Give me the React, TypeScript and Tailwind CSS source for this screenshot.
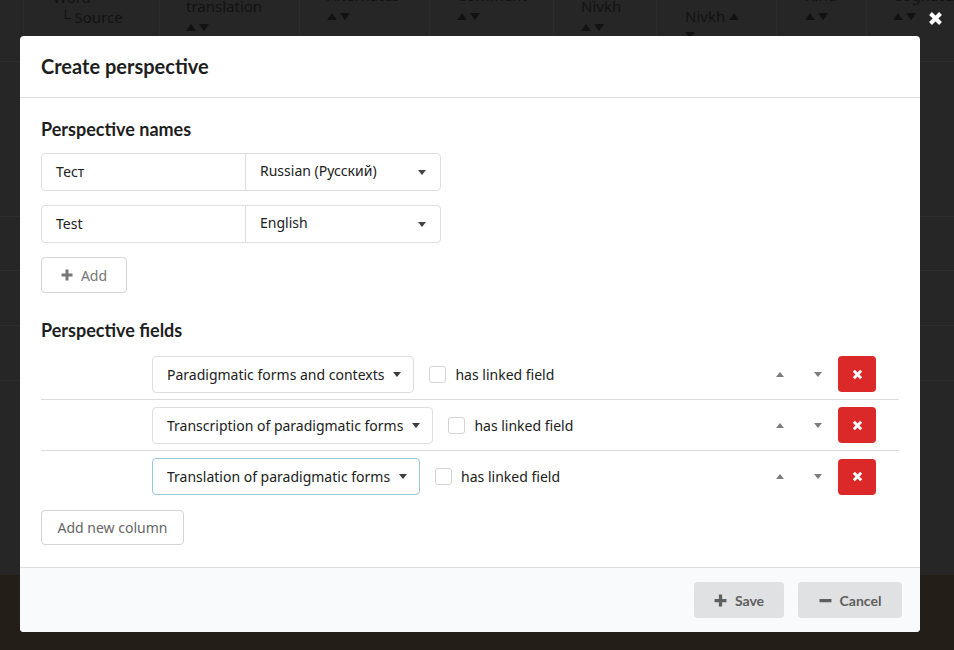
import type { ReactNode } from "react"

const NAMES = [
  { text: "Тест", lang: "Russian (Русский)" },
  { text: "Test", lang: "English" },
]

const FIELDS = [
  { label: "Paradigmatic forms and contexts", focused: false },
  { label: "Transcription of paradigmatic forms", focused: false },
  { label: "Translation of paradigmatic forms", focused: true },
]

function Caret({ up = false, className = "" }: { up?: boolean; className?: string }) {
  return (
    <svg width="8" height="5" viewBox="0 0 8 5" className={className} aria-hidden>
      <path d={up ? "M0 5h8L4 0z" : "M0 0h8L4 5z"} fill="currentColor" />
    </svg>
  )
}

function HeavyX({ size = 12, className = "" }: { size?: number; className?: string }) {
  return (
    <svg width={size} height={size} viewBox="0 0 12 12" className={className} aria-hidden>
      <path d="M2 2l8 8M10 2l-8 8" stroke="currentColor" strokeWidth="3.2" />
    </svg>
  )
}

function Plus({ size = 12 }: { size?: number }) {
  return (
    <svg width={size} height={size} viewBox="0 0 12 12" aria-hidden>
      <path d="M6 0.5v11M0.5 6h11" stroke="currentColor" strokeWidth="3" />
    </svg>
  )
}

function Minus({ size = 13 }: { size?: number }) {
  return (
    <svg width={size} height={size} viewBox="0 0 12 12" aria-hidden>
      <path d="M0.5 6h11" stroke="currentColor" strokeWidth="3" />
    </svg>
  )
}

function SortArrows() {
  return (
    <span className="inline-flex items-center gap-[3px] align-middle">
      <svg width="10" height="7" viewBox="0 0 10 7" aria-hidden>
        <path d="M0 7h10L5 0z" fill="currentColor" />
      </svg>
      <svg width="10" height="7" viewBox="0 0 10 7" aria-hidden>
        <path d="M0 0h10L5 7z" fill="currentColor" />
      </svg>
    </span>
  )
}

function HeadCell({ width, offset, pl, children, last = false }: {
  width: string
  offset: string
  pl: string
  children: ReactNode
  last?: boolean
}) {
  return (
    <div className={`${width} ${pl} h-full overflow-hidden ${last ? "" : "border-r border-[#2c2c2c]"}`}>
      <div className={`${offset} flex flex-col leading-[20px]`}>{children}</div>
    </div>
  )
}

function BackgroundPage() {
  return (
    <div className="flex h-full flex-col text-[15px] text-[#121212]">
      <div className="flex h-[62px] border-b border-[#2d2d2d]">
        <div className="h-full w-[24px] border-r border-[#2c2c2c]" />
        <HeadCell width="w-[136px]" offset="-mt-[13px]" pl="pl-[29px]">
          <span>Word</span>
          <span className="pl-[7px]">└ Source</span>
        </HeadCell>
        <HeadCell width="w-[140px]" offset="-mt-[4px]" pl="pl-[26px]">
          <span>translation</span>
          <span><SortArrows /></span>
        </HeadCell>
        <HeadCell width="w-[130px]" offset="-mt-[15px]" pl="pl-[27px]">
          <span>Alternates</span>
          <span><SortArrows /></span>
        </HeadCell>
        <HeadCell width="w-[124px]" offset="-mt-[15px]" pl="pl-[27px]">
          <span>Comment</span>
          <span><SortArrows /></span>
        </HeadCell>
        <HeadCell width="w-[103px]" offset="-mt-[4px]" pl="pl-[27px]">
          <span>Nivkh</span>
          <span><SortArrows /></span>
        </HeadCell>
        <HeadCell width="w-[120px]" offset="mt-[6px]" pl="pl-[28px]">
          <span className="flex items-center gap-[4px]">
            Nivkh
            <svg width="10" height="7" viewBox="0 0 10 7" aria-hidden>
              <path d="M0 7h10L5 0z" fill="currentColor" />
            </svg>
          </span>
          <span className="pt-[6px]">
            <svg width="10" height="7" viewBox="0 0 10 7" aria-hidden>
              <path d="M0 0h10L5 7z" fill="currentColor" />
            </svg>
          </span>
        </HeadCell>
        <HeadCell width="w-[90px]" offset="-mt-[15px]" pl="pl-[28px]">
          <span>Kind</span>
          <span><SortArrows /></span>
        </HeadCell>
        <HeadCell width="flex-1" offset="-mt-[15px]" pl="pl-[26px]" last>
          <span>Cognates</span>
          <span><SortArrows /></span>
        </HeadCell>
      </div>
      <div className="h-[155px] border-b border-[#2d2d2d]" />
      <div className="h-[54px] border-b border-[#2d2d2d]" />
      <div className="h-[55px] border-b border-[#2d2d2d]" />
      <div className="h-[55px] border-b border-[#2d2d2d]" />
      <div className="flex-1" />
      <div className="h-[75px] bg-[#231e18]" />
    </div>
  )
}

function FieldRow({ label, focused, last }: { label: string; focused: boolean; last: boolean }) {
  return (
    <div className={`flex h-[51px] items-center pl-[111px] pr-[23px] ${last ? "" : "border-b border-[#dcdcdc]"}`}>
      <div
        className={`flex h-[37px] items-center gap-[9px] rounded-[4px] border bg-white pl-[14px] pr-[12px] text-[14px] text-[#212121] ${
          focused ? "border-[#96c8da]" : "border-[#dedede]"
        }`}
      >
        <span>{label}</span>
        <Caret className="text-[#3d3d3d]" />
      </div>
      <div className="ml-[15px] h-[17px] w-[17px] rounded-[3px] border border-[#d4d4d5] bg-white" />
      <span className="ml-[9px] text-[14px] text-[#212121]">has linked field</span>
      <div className="ml-auto flex items-center">
        <button type="button" className="flex h-[36px] w-[38px] items-center justify-center text-[#7d7d7d]">
          <Caret up />
        </button>
        <button type="button" className="flex h-[36px] w-[38px] items-center justify-center text-[#7d7d7d]">
          <Caret />
        </button>
        <button
          type="button"
          className="ml-[1px] flex h-[36px] w-[38px] items-center justify-center rounded-[4px] bg-[#db2828] text-white"
        >
          <HeavyX size={11} />
        </button>
      </div>
    </div>
  )
}

export default function App() {
  return (
    <div className="relative h-[650px] w-[954px] overflow-hidden bg-[#262626] font-['Noto_Sans',sans-serif]">
      <BackgroundPage />

      <div className="absolute inset-0">
        <button type="button" aria-label="Close" className="absolute left-[928px] top-[11px] text-white">
          <HeavyX size={15} />
        </button>

        <div className="ml-[20px] mt-[36px] w-[900px] overflow-hidden rounded-[4px] bg-white">
          <div className="flex h-[62px] items-center border-b border-[#dededf] px-[21px] pb-[1px] font-['Lato',sans-serif] text-[20px] font-bold text-[#1e1e1e]">
            Create perspective
          </div>

          <div className="px-[21px] pt-[21px] pb-[22px]">
            <h3 className="font-['Lato',sans-serif] text-[18px] font-bold leading-[20px] text-[#1e1e1e]">
              Perspective names
            </h3>
            <div className="mt-[14px] flex flex-col gap-[14px]">
              {NAMES.map((n) => (
                <div key={n.lang} className="flex h-[38px] w-[400px] rounded-[4px] border border-[#dedede] text-[14px] text-[#212121]">
                  <div className="flex w-[204px] items-center border-r border-[#dedede] px-[14px] pb-[1px]">{n.text}</div>
                  <div className="flex flex-1 items-center justify-between pl-[14px] pr-[14px]">
                    <span className="-mt-[3px]">{n.lang}</span>
                    <Caret className="text-[#444]" />
                  </div>
                </div>
              ))}
            </div>
            <button
              type="button"
              className="mt-[14px] flex h-[36px] w-[86px] items-center justify-center gap-[8px] rounded-[4px] border border-[#d4d4d5] bg-white text-[14px] text-[#767676]"
            >
              <Plus size={12} />
              <span>Add</span>
            </button>

            <h3 className="mt-[27px] font-['Lato',sans-serif] text-[18px] font-bold leading-[20px] text-[#1e1e1e]">
              Perspective fields
            </h3>
            <div className="mt-[9px]">
              {FIELDS.map((f, i) => (
                <FieldRow key={f.label} label={f.label} focused={f.focused} last={i === FIELDS.length - 1} />
              ))}
            </div>
            <button
              type="button"
              className="mt-[8px] flex h-[35px] w-[143px] items-center justify-center rounded-[4px] border border-[#d4d4d5] bg-white text-[14px] text-[#666]"
            >
              Add new column
            </button>
          </div>

          <div className="flex justify-end gap-[14px] border-t border-[#dededf] bg-[#f9fafb] py-[14px] pr-[18px] font-['Lato',sans-serif] text-[14px] font-bold text-[#5e5e5e]">
            <button type="button" className="flex h-[36px] w-[90px] items-center justify-center gap-[8px] rounded-[4px] bg-[#e0e1e2]">
              <Plus size={13} />
              <span>Save</span>
            </button>
            <button type="button" className="flex h-[36px] w-[104px] items-center justify-center gap-[8px] rounded-[4px] bg-[#e0e1e2]">
              <Minus size={13} />
              <span>Cancel</span>
            </button>
          </div>
        </div>
      </div>
    </div>
  )
}
